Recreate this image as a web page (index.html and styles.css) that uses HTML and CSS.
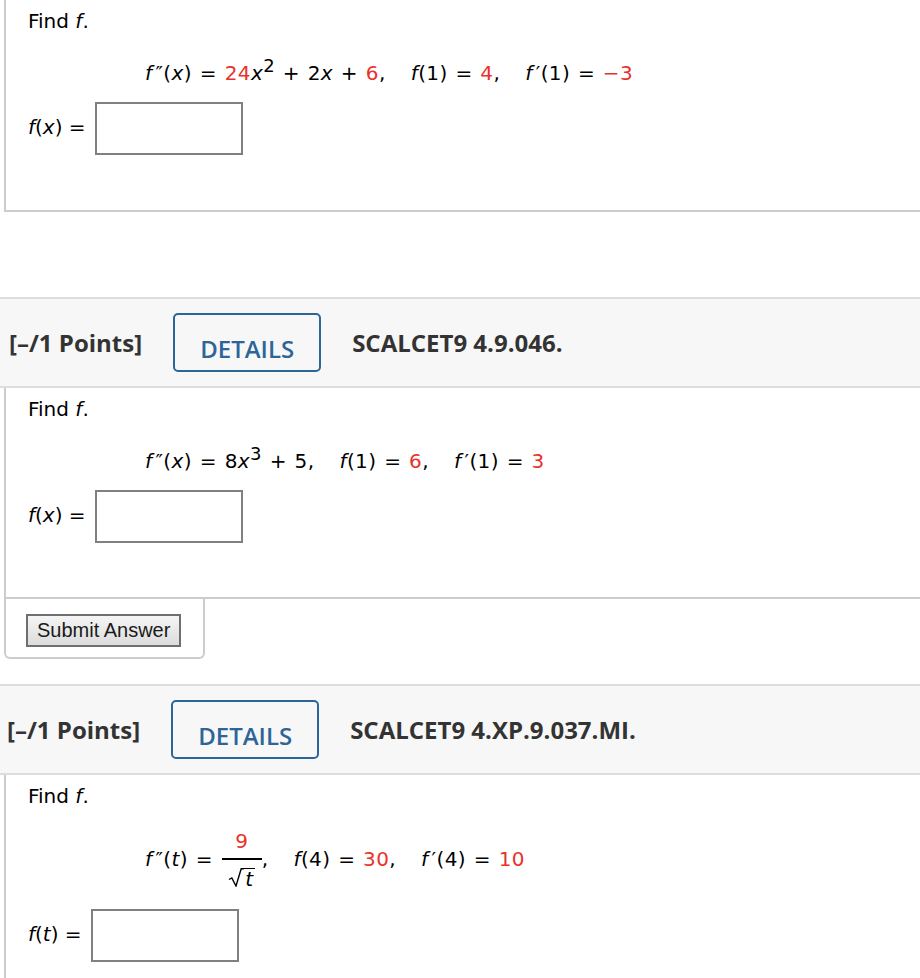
FILE: index.html
```html
<!DOCTYPE html>
<html lang="en">
<head>
<meta charset="utf-8">
<title>Find f</title>
<link rel="stylesheet" href="styles.css">
</head>
<body>
<div class="qbody">
  <p class="find">Find <i>f</i>.</p>
  <div class="eq"><i>f</i><span class="pr">″</span>(<i>x</i>) = <span class="r">24</span><i>x</i><sup>2</sup> + 2<i>x</i> + <span class="r">6</span>,<span class="sep"></span><i>f</i>(1) = <span class="r">4</span>,<span class="sep"></span><i>f</i><span class="pr">′</span>(1) = <span class="r">−3</span></div>
  <div class="ans"><i>f</i>(<i>x</i>) = <input class="answer" type="text" aria-label="f(x)"></div>
</div>

<div class="hdr">
  <span class="pts">[–/1 Points]</span>
  <button class="details" type="button">DETAILS</button>
  <span class="code">SCALCET9 4.9.046.</span>
</div>
<div class="qbody qbody-sub">
  <p class="find">Find <i>f</i>.</p>
  <div class="eq"><i>f</i><span class="pr">″</span>(<i>x</i>) = 8<i>x</i><sup>3</sup> + 5,<span class="sep"></span><i>f</i>(1) = <span class="r">6</span>,<span class="sep"></span><i>f</i><span class="pr">′</span>(1) = <span class="r">3</span></div>
  <div class="ans"><i>f</i>(<i>x</i>) = <input class="answer" type="text" aria-label="f(x)"></div>
</div>
<div class="subwrap">
  <button class="submit" type="button">Submit Answer</button>
</div>

<div class="hdr hdr-b">
  <span class="pts">[–/1 Points]</span>
  <button class="details" type="button">DETAILS</button>
  <span class="code">SCALCET9 4.XP.9.037.MI.</span>
</div>
<div class="qbody">
  <p class="find">Find <i>f</i>.</p>
  <div class="eq eq-tall"><i>f</i><span class="pr">″</span>(<i>t</i>) = <span class="frac"><span class="num r">9</span><span class="den"><svg class="rad" width="16" height="19" viewBox="0 0 16 19"><path d="M1 11.5 L3.8 10 L8 18 L13.2 0.8 L16 0.8" fill="none" stroke="#000" stroke-width="1.4"/></svg><span class="radicand"><i>t</i></span></span></span>,<span class="sep"></span><i>f</i>(4) = <span class="r">30</span>,<span class="sep"></span><i>f</i><span class="pr">′</span>(4) = <span class="r">10</span></div>
  <div class="ans ans-tall"><i>f</i>(<i>t</i>) = <input class="answer" type="text" aria-label="f(t)"></div>
</div>
</body>
</html>
```

FILE: styles.css
```css
html, body {
  margin: 0;
  padding: 0;
}

body {
  width: 920px;
  height: 978px;
  overflow: hidden;
  background: #ffffff;
  font-family: "DejaVu Sans", Verdana, sans-serif;
  font-size: 20px;
  color: #000000;
}

.qbody {
  margin-left: 4px;
  border-left: 2px solid #cccccc;
  border-bottom: 2px solid #cccccc;
  padding: 9px 0 55px 22px;
}

.qbody-sub {
  padding-bottom: 54px;
}

.find {
  margin: 0;
  line-height: 24px;
}

.eq {
  margin-top: 28px;
  padding-left: 117px;
  line-height: 24px;
  white-space: nowrap;
  letter-spacing: 0.4px;
  word-spacing: 1px;
}

.eq-tall {
  margin-top: 23px;
}

.pr {
  margin-left: 3px;
}

.r {
  color: #e8322b;
}

sup {
  font-size: 18px;
  line-height: 0;
  vertical-align: 8px;
}

.sep {
  display: inline-block;
  width: 25px;
}

.ans {
  margin-top: 17px;
  line-height: 24px;
  white-space: nowrap;
}

.ans-tall {
  margin-top: 19px;
}

.answer {
  vertical-align: middle;
  width: 148px;
  height: 53px;
  box-sizing: border-box;
  margin: 0 0 0 3px;
  padding: 0;
  border: 2px solid #808080;
  border-radius: 0;
  background: #ffffff;
  outline: none;
}

.frac {
  display: inline-block;
  width: 40px;
  margin-left: 1px;
  text-align: center;
  vertical-align: -19.6px;
  letter-spacing: 0;
}

.num {
  display: block;
  line-height: 20px;
  padding-bottom: 7px;
  border-bottom: 2px solid #000000;
}

.den {
  display: block;
  line-height: 22px;
  padding-top: 8px;
}

.rad {
  display: inline-block;
  vertical-align: top;
}

.radicand {
  display: inline-block;
  vertical-align: top;
  line-height: 20px;
  border-top: 1.4px solid #000000;
  padding: 0 2px 0 1px;
}

.hdr {
  margin-top: 85px;
  display: flex;
  align-items: center;
  gap: 31px;
  height: 87px;
  padding-left: 9px;
  background: #f7f7f7;
  border-top: 2px solid #dddddd;
  border-bottom: 2px solid #dddddd;
  font-family: "Open Sans", sans-serif;
  font-weight: 700;
  font-size: 24px;
  color: #333333;
}

.hdr-b {
  margin-top: 25px;
  padding-left: 7px;
}

.details {
  width: 148px;
  height: 59px;
  box-sizing: border-box;
  margin: 0;
  padding: 17px 0 5px;
  border: 2px solid #2d6599;
  border-radius: 5px;
  background: transparent;
  color: #2d6599;
  font-family: "Open Sans", sans-serif;
  font-weight: 600;
  font-size: 24px;
  line-height: normal;
}

.subwrap {
  margin-left: 4px;
  width: 201px;
  box-sizing: border-box;
  border: 2px solid #cccccc;
  border-top: 0;
  border-radius: 0 0 6px 6px;
  padding: 15px 0 10px 20px;
}

.submit {
  display: block;
  height: 33px;
  box-sizing: border-box;
  margin: 0;
  padding: 3px 9px;
  border: 2px solid #6f6f6f;
  border-radius: 0;
  background: linear-gradient(#f5f5f5, #dcdcdc);
  color: #1a1a1a;
  font-family: "Liberation Sans", Arial, sans-serif;
  font-size: 20px;
  line-height: 23px;
}
```
